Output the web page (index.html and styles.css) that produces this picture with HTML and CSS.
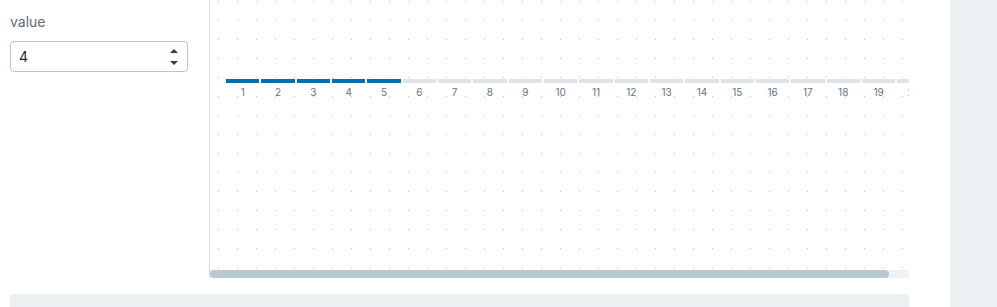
FILE: index.html
```html
<!DOCTYPE html>
<html lang="en">
  <head>
    <meta charset="UTF-8" />
    <meta name="viewport" content="width=device-width, initial-scale=1.0" />
    <title>Steps</title>
    <link rel="stylesheet" href="styles.css">
  </head>
  <body>
    <div class="page">
      <div class="top">
        <!-- Controls -->
        <aside class="sidebar">
          <label class="field-label" for="value">value</label>
          <div class="number-field">
            <input type="number" id="value" class="number-input" value="4" />
            <div class="spinner">
              <span class="arrow arrow-up"></span>
              <span class="arrow arrow-down"></span>
            </div>
          </div>
        </aside>

        <!-- Canvas -->
        <section class="canvas">
          <div class="scroller">
            <div class="steps" id="steps"></div>
          </div>
          <div class="scrollbar">
            <div class="scrollbar-thumb"></div>
          </div>
        </section>
      </div>

      <div class="footer"></div>
    </div>

    <div class="rail"></div>

    <script>
      document.addEventListener("DOMContentLoaded", function () {
        const steps = document.getElementById("steps");
        const active = 5;

        for (let i = 1; i <= 20; i++) {
          const step = document.createElement("div");
          step.className = "step";

          const bar = document.createElement("div");
          bar.className = i <= active ? "bar bar-active" : "bar";

          const label = document.createElement("div");
          label.className = "step-label";
          label.textContent = i;

          step.appendChild(bar);
          step.appendChild(label);
          steps.appendChild(step);
        }
      });
    </script>
  </body>
</html>
```

FILE: styles.css
```css
body {
  font-family: Inter, "Noto Sans", sans-serif;
  margin: 0;
  padding: 0;
  background-color: #fff;
  display: flex;
  height: 307px;
  overflow: hidden;
}

.page {
  width: 909px;
  display: flex;
  flex-direction: column;
}

.top {
  display: flex;
}

.sidebar {
  width: 209px;
  padding: 12px 0 0 10px;
  box-sizing: border-box;
  display: flex;
  flex-direction: column;
}

.field-label {
  font-size: 14px;
  line-height: 20px;
  color: #5f6b75;
  margin-bottom: 9px;
}

.number-field {
  width: 178px;
  height: 31px;
  box-sizing: border-box;
  border: 1px solid #b9c5cd;
  border-radius: 4px;
  display: flex;
  align-items: center;
  background: #fff;
}

.number-input {
  flex: 1;
  min-width: 0;
  border: none;
  outline: none;
  background: transparent;
  font-family: inherit;
  font-size: 14px;
  color: #1c2833;
  padding: 0 0 0 8px;
  height: 100%;
  -moz-appearance: textfield;
}

.number-input::-webkit-inner-spin-button,
.number-input::-webkit-outer-spin-button {
  -webkit-appearance: none;
  margin: 0;
}

.spinner {
  width: 18px;
  display: flex;
  flex-direction: column;
  align-items: center;
  gap: 8px;
  padding-right: 4px;
}

.arrow {
  width: 0;
  height: 0;
  border-left: 4px solid transparent;
  border-right: 4px solid transparent;
}

.arrow-up {
  border-bottom: 4px solid #2d4050;
}

.arrow-down {
  border-top: 4px solid #2d4050;
}

.canvas {
  width: 700px;
  height: 278px;
  box-sizing: border-box;
  border-left: 1px solid #d3dbe0;
  display: flex;
  flex-direction: column;
}

.scroller {
  flex: 1;
  overflow: hidden;
  background-image: radial-gradient(circle, #bcc2c7 0.7px, transparent 1px);
  background-size: 19px 19px;
  background-position: -1px -8px;
}

.scrollbar {
  height: 8px;
  background: #eef2f5;
}

.scrollbar-thumb {
  width: 679px;
  height: 100%;
  background: #b8c9d4;
  border-radius: 4px;
}

.steps {
  display: flex;
  gap: 2px;
  padding: 79px 0 0 16px;
  width: max-content;
}

.step {
  width: 33.33px;
  display: flex;
  flex-direction: column;
  align-items: center;
}

.bar {
  width: 100%;
  height: 4px;
  background: #e0e4e7;
}

.bar-active {
  background: #0b6ca6;
}

.step-label {
  font-size: 10px;
  line-height: 12px;
  margin-top: 3px;
  color: #66727c;
}

.footer {
  margin: 16px 0 0 10px;
  height: 30px;
  background: #ebf0f3;
  border-radius: 4px 4px 0 0;
}

.rail {
  width: 47px;
  margin-left: 41px;
  height: 307px;
  background: #ebf0f3;
}
```
